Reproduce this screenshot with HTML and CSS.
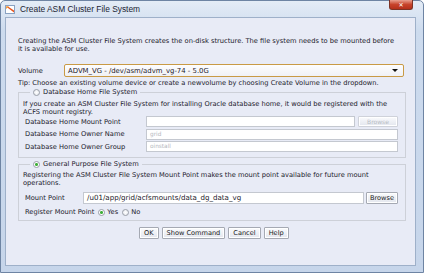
FILE: index.html
```html
<!DOCTYPE html>
<html lang="en">
<head>
  <meta charset="UTF-8" />
  <title>Create ASM Cluster File System</title>
  <link rel="stylesheet" href="styles.css">
</head>
<body>
  <div class="window">
    <!-- title bar -->
    <div class="titlebar">
      <svg class="app-icon" width="10" height="9" viewBox="0 0 10 9">
        <rect x="0.5" y="0.5" width="9" height="8" fill="#fff" stroke="#8aa2c2"/>
        <path d="M1 1.5 L9 7.5 L9 5.5 L3 1.5 Z" fill="#e8541c"/>
        <path d="M1 1.5 L4 1.5 L1 4 Z" fill="#f3a23a"/>
      </svg>
      <span class="title">Create ASM Cluster File System</span>
      <span class="close">&#x2715;</span>
    </div>

    <div class="client">
      <p class="desc">Creating the ASM Cluster File System creates the on-disk structure. The file system needs to be mounted before<br>it is available for use.</p>

      <div class="volume-row">
        <span class="label">Volume</span>
        <div class="combo">
          <span>ADVM_VG - /dev/asm/advm_vg-74 - 5.0G</span>
          <span class="arrow"></span>
        </div>
      </div>

      <p class="tip">Tip: Choose an existing volume device or create a newvolume by choosing Create Volume in the dropdown.</p>

      <fieldset class="group group-db">
        <legend><span class="radio"></span>Database Home File System</legend>
        <p class="note">If you create an ASM Cluster File System for installing Oracle database home, it would be registered with the<br>ACFS mount registry.</p>
        <div class="form-row">
          <span class="field-label">Database Home Mount Point</span>
          <div class="field short"></div>
          <button class="btn disabled">Browse</button>
        </div>
        <div class="form-row">
          <span class="field-label">Database Home Owner Name</span>
          <div class="field dim">grid</div>
        </div>
        <div class="form-row">
          <span class="field-label">Database Home Owner Group</span>
          <div class="field dim">oinstall</div>
        </div>
      </fieldset>

      <fieldset class="group group-gp">
        <legend><span class="radio checked"></span>General Purpose File System</legend>
        <p class="note">Registering the ASM Cluster File System Mount Point makes the mount point available for future mount<br>operations.</p>
        <div class="mount-row">
          <span class="mount-label">Mount Point</span>
          <div class="field">/u01/app/grid/acfsmounts/data_dg_data_vg</div>
          <button class="btn">Browse</button>
        </div>
        <div class="register-row">
          <span>Register Mount Point</span>
          <span class="radio checked"></span><span>Yes</span>
          <span class="radio"></span><span>No</span>
        </div>
      </fieldset>

      <div class="actions">
        <button class="btn">OK</button>
        <button class="btn">Show Command</button>
        <button class="btn">Cancel</button>
        <button class="btn">Help</button>
      </div>
    </div>
  </div>
</body>
</html>
```

FILE: styles.css
```css
* {
  box-sizing: border-box;
  margin: 0;
  padding: 0;
}

body {
  width: 424px;
  height: 273px;
  overflow: hidden;
  font-family: 'DejaVu Sans', Verdana, sans-serif;
  font-size: 6.7px;
  color: #1b202b;
}

.window {
  width: 424px;
  height: 273px;
  background: linear-gradient(#e4ecf6, #cddbee 30px, #c6d5ea);
  border: 1px solid #6e84a3;
  border-radius: 5px 5px 0 0;
  display: flex;
  flex-direction: column;
  padding: 0 7px 6px 4px;
}

/* title bar */
.titlebar {
  height: 16px;
  display: flex;
  align-items: center;
  gap: 5px;
}

.app-icon {
  flex: none;
}

.title {
  font-family: 'Liberation Sans', Arial, sans-serif;
  font-size: 8.4px;
  color: #1c2533;
  margin-top: -1px;
}

.close {
  margin-left: auto;
  align-self: flex-start;
  width: 24px;
  height: 10px;
  margin-right: 3px;
  margin-top: -1px;
  background: linear-gradient(#e9a08f, #c7432b 50%, #b5301a);
  border: 1px solid #7d3325;
  border-top: none;
  border-radius: 0 0 3px 3px;
  color: #fff;
  font-size: 6px;
  font-weight: bold;
  display: flex;
  align-items: center;
  justify-content: center;
}

.client {
  flex: 1;
  background: #e8ebf6;
  border: 1px solid #9eb0c9;
  padding: 19px 11px 0 12px;
}

.desc {
  line-height: 8px;
  margin-bottom: 11px;
}

.volume-row {
  display: flex;
  align-items: center;
  height: 13px;
}

.label {
  width: 46px;
}

.combo {
  flex: 1;
  height: 13px;
  border: 1px solid #c99a45;
  background: linear-gradient(#fdfdfe, #f0f1f6);
  border-radius: 2px;
  display: flex;
  align-items: center;
  padding: 0 5px 0 3px;
  font-size: 6.9px;
}

.combo .arrow {
  margin-left: auto;
  width: 0;
  height: 0;
  border-left: 3px solid transparent;
  border-right: 3px solid transparent;
  border-top: 3px solid #111;
}

.tip {
  line-height: 8px;
  margin-top: 2px;
}

/* group boxes */
.group {
  border: 1px solid #cdd0d8;
  margin: 1px 0 0;
  padding: 0 7px 4px 6px;
  width: 388px;
}

.group legend {
  margin-left: 5px;
  padding: 0 3px;
  display: flex;
  align-items: center;
  gap: 3px;
  line-height: 8px;
}

.radio {
  display: inline-block;
  width: 7px;
  height: 7px;
  border-radius: 50%;
  border: 1px solid #9a9ea8;
  background: radial-gradient(#ffffff, #e4e6ec);
  flex: none;
}

.radio.checked {
  background: radial-gradient(#3fae3a 0, #3fae3a 1.3px, #fff 1.6px);
}

.note {
  line-height: 8px;
  margin-left: -2px;
  margin-top: 3.5px;
}

.form-row {
  display: flex;
  align-items: center;
  height: 12.5px;
}

.field-label {
  width: 121px;
  flex: none;
}

.field {
  flex: 1;
  height: 11px;
  background: #fff;
  border: 1px solid #c4c8d0;
  padding: 0 3px;
  line-height: 9px;
}

.field.short {
  margin-right: 3px;
}

.field.dim {
  color: #b4b8c0;
  font-size: 5.8px;
}

.btn {
  font-family: 'DejaVu Sans', Verdana, sans-serif;
  font-size: 6.6px;
  color: #222;
  height: 11px;
  padding: 0 4px;
  background: linear-gradient(#fafbfd, #e3e6ee);
  border: 1px solid #a5a9b3;
  border-radius: 1px;
  box-shadow: inset 0 0 0 1px #fff;
}

.btn.disabled {
  width: 40px;
  color: #b8bcc4;
  border-color: #cfd2da;
  font-size: 6px;
}

.group-gp {
  margin-top: 2px;
  padding-bottom: 3px;
}

.group-gp .note {
  margin-top: 2.5px;
  line-height: 8.5px;
}

.mount-row {
  display: flex;
  align-items: center;
  margin-top: 4px;
  height: 12px;
}

.mount-row .field {
  height: 12px;
  line-height: 10px;
  margin-right: 2px;
  font-size: 7.1px;
}

.mount-label {
  width: 58px;
  flex: none;
}

.mount-row .btn {
  height: 12px;
  width: 32px;
  padding: 0;
}

.register-row {
  display: flex;
  align-items: center;
  gap: 2px;
  margin-top: 4px;
  height: 9px;
}

.register-row .radio {
  margin-left: 2px;
}

.actions {
  display: flex;
  gap: 3px;
  padding-left: 121px;
  margin-top: 6px;
}

.actions .btn {
  height: 12px;
}
```
